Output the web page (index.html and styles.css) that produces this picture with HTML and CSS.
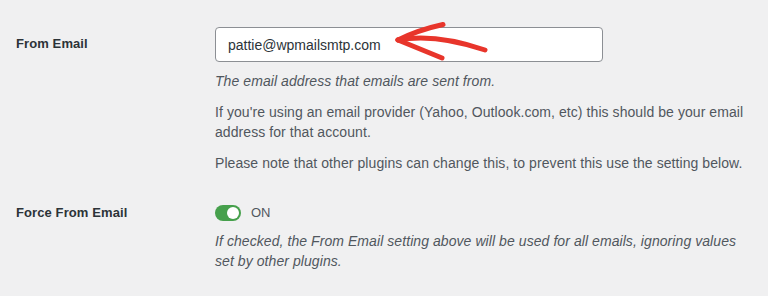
FILE: index.html
```html
<!DOCTYPE html>
<html lang="en">
<head>
    <meta charset="UTF-8">
    <meta name="viewport" content="width=device-width, initial-scale=1.0">
    <title>WP Mail SMTP - From Email</title>
    <link rel="stylesheet" href="styles.css">
</head>
<body>
    <div class="settings">
        <div class="row row-input">
            <div class="label">From Email</div>
            <div class="field">
                <div class="input-wrap">
                    <input type="email" class="text-input" value="pattie@wpmailsmtp.com">
                    <svg class="arrow" width="110" height="45" viewBox="0 0 110 45">
                        <path d="M8 20 Q45 13 95 30" />
                        <path d="M53 4.5 Q28 10 8 20" />
                        <path d="M8 20 Q30 29 52 38" />
                    </svg>
                </div>
                <p class="desc desc-italic">The email address that emails are sent from.</p>
                <p class="desc">If you're using an email provider (Yahoo, Outlook.com, etc) this should be your email address for that account.</p>
                <p class="desc">Please note that other plugins can change this, to prevent this use the setting below.</p>
            </div>
        </div>

        <div class="row row-toggle">
            <div class="label">Force From Email</div>
            <div class="field">
                <label class="toggle">
                    <span class="switch"><span class="knob"></span></span>
                    <span class="toggle-text">ON</span>
                </label>
                <p class="desc desc-italic">If checked, the From Email setting above will be used for all emails, ignoring values set by other plugins.</p>
            </div>
        </div>
    </div>
</body>
</html>
```

FILE: styles.css
```css
* {
    margin: 0;
    padding: 0;
    box-sizing: border-box;
}

body {
    font-family: "Liberation Sans", Arial, sans-serif;
    background: #f0f0f1;
    color: #1d2327;
    min-height: 100vh;
}

.settings {
    padding: 27px 0 0 16px;
}

.row {
    display: grid;
    grid-template-columns: 199px 1fr;
}

.row-toggle {
    margin-top: 30px;
}

.label {
    font-size: 13px;
    font-weight: bold;
    line-height: 20px;
    color: #2c3338;
    letter-spacing: 0.1px;
}

.row-input .label {
    padding-top: 7px;
}

.input-wrap {
    position: relative;
    width: 388px;
}

.text-input {
    display: block;
    width: 388px;
    height: 35px;
    padding: 0 12px;
    border: 1px solid #8c8f94;
    border-radius: 4px;
    background: #fff;
    font-family: "Liberation Sans", Arial, sans-serif;
    font-size: 14px;
    color: #2c3338;
}

.arrow {
    position: absolute;
    left: 175px;
    top: -7px;
    fill: none;
    stroke: #e8352b;
    stroke-width: 5;
    stroke-linecap: round;
    stroke-linejoin: round;
}

.desc {
    max-width: 534px;
    margin-top: 11px;
    font-size: 14px;
    line-height: 20px;
    letter-spacing: 0.07px;
    color: #50575e;
}

.input-wrap + .desc {
    margin-top: 9px;
}

.desc-italic {
    font-style: italic;
}

.toggle {
    display: flex;
    align-items: center;
    height: 20px;
}

.switch {
    position: relative;
    width: 26px;
    height: 16px;
    border-radius: 8px;
    background: #46a04c;
}

.knob {
    position: absolute;
    top: 2px;
    right: 2px;
    width: 12px;
    height: 12px;
    border-radius: 50%;
    background: #fff;
}

.toggle-text {
    margin-left: 10px;
    font-size: 13px;
    line-height: 20px;
    color: #50575e;
}

.toggle + .desc {
    margin-top: 8px;
}
```
